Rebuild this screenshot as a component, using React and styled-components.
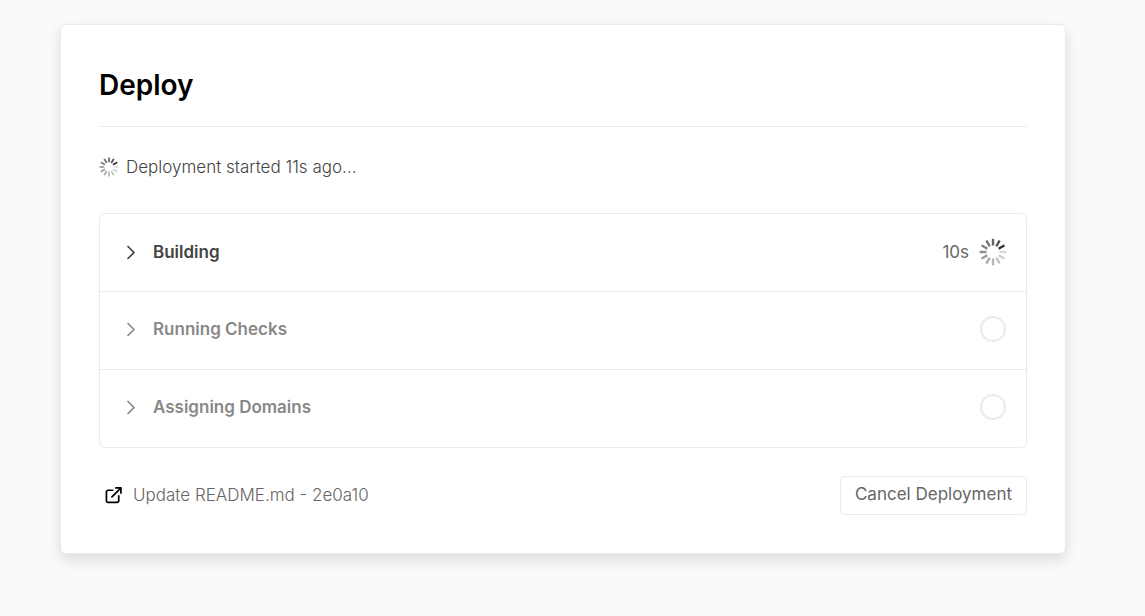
import React, { useState } from "react";
import styled, { createGlobalStyle } from "styled-components";

const GlobalStyle = createGlobalStyle`
  * {
    box-sizing: border-box;
  }

  body {
    margin: 0;
    background: #fafafa;
    font-family: "Inter", sans-serif;
    font-size: 17px;
    line-height: 26px;
    color: #444;
  }
`;

const Page = styled.main`
  padding: 24px 79px 62px 60px;
`;

const Card = styled.section`
  padding: 38px;
  background: #fff;
  border: 1px solid #eaeaea;
  border-radius: 6px;
  box-shadow: 0 6px 14px rgba(0, 0, 0, 0.12);
`;

const Title = styled.h1`
  margin: 0;
  padding: 3px 0 22px;
  border-bottom: 1px solid #eaeaea;
  font-size: 28px;
  font-weight: 600;
  line-height: 38px;
  color: #000;
`;

const Status = styled.p`
  display: flex;
  align-items: center;
  gap: 7px;
  margin: 27px 0 33px;
  font-weight: 300;
`;

const StepList = styled.ul`
  margin: 0;
  padding: 0;
  list-style: none;
  border: 1px solid #eaeaea;
  border-radius: 6px;
`;

const StepItem = styled.li`
  & + & {
    border-top: 1px solid #eaeaea;
  }
`;

const StepButton = styled.button`
  display: flex;
  align-items: center;
  width: 100%;
  height: 77px;
  padding: 0 19px ${(props) => (props.$active ? "1px" : "4px")} 24px;
  border: 0;
  background: transparent;
  color: ${(props) => (props.$active ? "#444" : "#888")};
  font: inherit;
  text-align: left;
  cursor: pointer;
`;

const StepName = styled.span`
  flex: 1;
  margin-left: 15px;
  font-weight: 600;
`;

const StepTime = styled.span`
  margin-right: 10px;
  color: #666;
  font-weight: 400;
`;

const PendingCircle = styled.span`
  width: 26px;
  height: 26px;
  margin-right: 1px;
  border: 2px solid #eaeaea;
  border-radius: 50%;
`;

const Footer = styled.footer`
  display: flex;
  align-items: center;
  justify-content: space-between;
  margin-top: 28px;
`;

const CommitLink = styled.a`
  display: flex;
  align-items: center;
  gap: 10px;
  padding: 0 0 2px 6px;
  color: #666;
  font-weight: 300;
  text-decoration: none;

  svg {
    color: #000;
  }
`;

const CancelButton = styled.button`
  height: 39px;
  padding: 0 14px 3px;
  border: 1px solid #eaeaea;
  border-radius: 5px;
  background: #fff;
  color: #666;
  font: inherit;
  font-weight: 400;
  cursor: pointer;
`;

const steps = [
  { id: 1, name: "Building", time: "10s", active: true },
  { id: 2, name: "Running Checks" },
  { id: 3, name: "Assigning Domains" },
];

// from the lightest bar at 3 o'clock, clockwise
const shades = [
  "#d9d9d9",
  "#cecece",
  "#c2c2c2",
  "#b5b5b5",
  "#a8a8a8",
  "#9b9b9b",
  "#8d8d8d",
  "#808080",
  "#727272",
  "#646464",
  "#505050",
  "#333333",
];

function Spinner({ size }) {
  return (
    <svg width={size} height={size} viewBox="0 0 28 28" aria-hidden="true">
      {shades.map((shade, index) => (
        <rect
          key={shade}
          x="20.5"
          y="12.8"
          width="6.8"
          height="2.4"
          rx="0.4"
          fill={shade}
          transform={`rotate(${index * 30} 14 14)`}
        />
      ))}
    </svg>
  );
}

function Chevron() {
  return (
    <svg
      width="14"
      height="16"
      viewBox="0 0 14 16"
      fill="none"
      stroke="currentColor"
      strokeWidth="1.7"
      strokeLinecap="round"
      strokeLinejoin="round"
      aria-hidden="true"
    >
      <path d="M4 2.5 10 8.5l-6 6" />
    </svg>
  );
}

function ExternalIcon() {
  return (
    <svg
      width="18"
      height="18"
      viewBox="0 0 19 19"
      fill="none"
      stroke="currentColor"
      strokeWidth="1.8"
      strokeLinecap="round"
      strokeLinejoin="round"
      aria-hidden="true"
    >
      <path d="M14.5 10.5v5a1.7 1.7 0 0 1-1.7 1.7H3.2a1.7 1.7 0 0 1-1.7-1.7V6.2a1.7 1.7 0 0 1 1.7-1.7h4.9" />
      <path d="M11.5 2h5.3v5.3M7.3 11.5 16.8 2" />
    </svg>
  );
}

function App() {
  const [selected, setSelected] = useState(null);

  return (
    <Page>
      <GlobalStyle />
      <Card>
        <Title>Deploy</Title>
        <Status>
          <Spinner size={20} />
          Deployment started 11s ago...
        </Status>
        <StepList>
          {steps.map((step) => (
            <StepItem key={step.id}>
              <StepButton
                type="button"
                $active={step.active}
                aria-expanded={selected === step.id}
                onClick={() =>
                  setSelected(selected === step.id ? null : step.id)
                }
              >
                <Chevron />
                <StepName>{step.name}</StepName>
                {step.time && <StepTime>{step.time}</StepTime>}
                {step.active ? <Spinner size={28} /> : <PendingCircle />}
              </StepButton>
            </StepItem>
          ))}
        </StepList>
        <Footer>
          <CommitLink href="#commit">
            <ExternalIcon />
            Update README.md - 2e0a10
          </CommitLink>
          <CancelButton type="button">Cancel Deployment</CancelButton>
        </Footer>
      </Card>
    </Page>
  );
}

export default App;
